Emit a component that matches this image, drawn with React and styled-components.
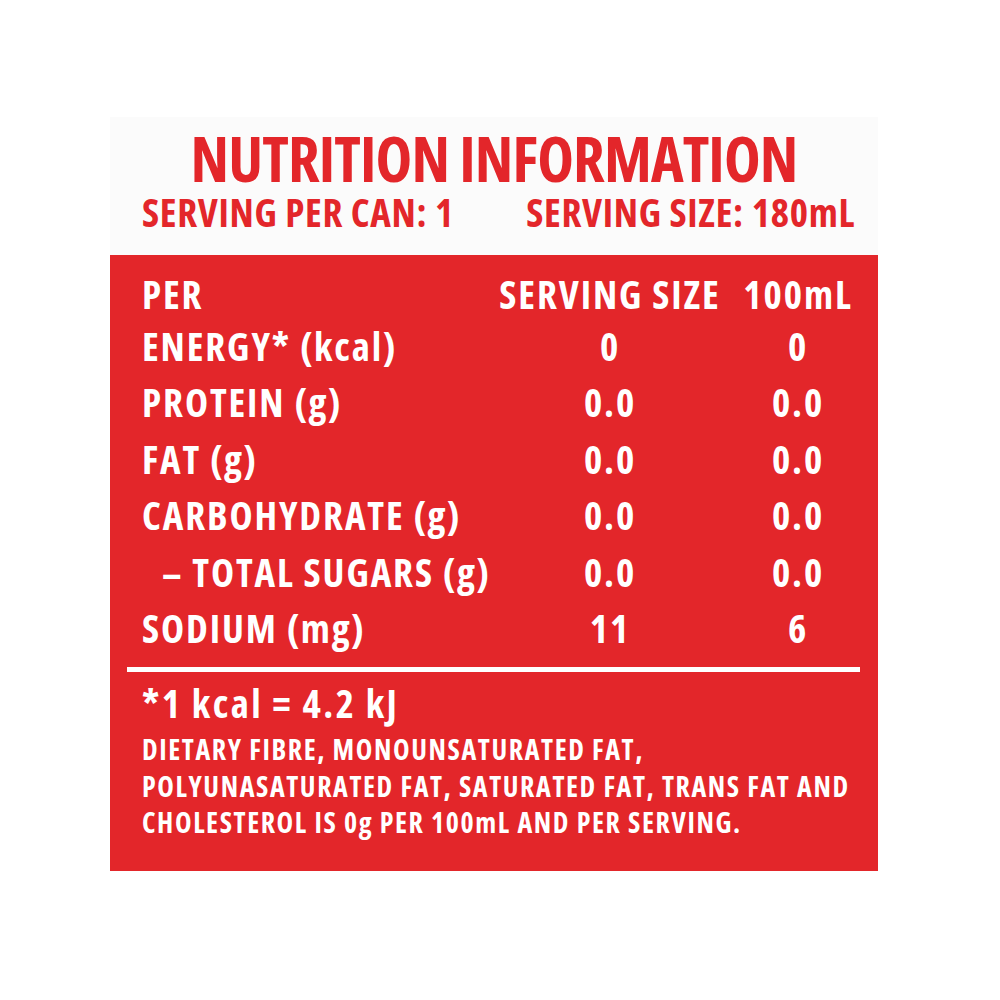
import React from "react";
import styled, { createGlobalStyle } from "styled-components";

const RED = "#e3262a";

const GlobalStyle = createGlobalStyle`
  html, body {
    margin: 0;
    padding: 0;
    background: #ffffff;
  }
  body {
    font-family: "Open Sans", "Roboto", sans-serif;
    font-stretch: 75%;
    font-weight: 700;
  }
`;

const Page = styled.div`
  width: 1000px;
  height: 1000px;
  padding: 117px 0 0 110px;
  box-sizing: border-box;
`;

const Label = styled.div`
  width: 768px;
`;

const Header = styled.div`
  background: #fbfbfb;
  height: 138px;
  box-sizing: border-box;
  padding-top: 9px;
  color: ${RED};
`;

const Title = styled.h1`
  margin: 0;
  font-size: 62px;
  line-height: 64px;
  font-weight: 700;
  text-align: center;
  letter-spacing: -0.9px;
  white-space: nowrap;
`;

const ServingRow = styled.div`
  display: flex;
  justify-content: space-between;
  padding: 0 23px 0 32px;
  font-size: 39px;
  line-height: 44px;
  letter-spacing: 0.7px;
  white-space: nowrap;
`;

const Body = styled.div`
  background: ${RED};
  color: #ffffff;
  height: 616px;
  box-sizing: border-box;
  padding-top: 15px;
`;

const Table = styled.div`
  display: grid;
  grid-template-columns: minmax(0, 1fr) 218px 120px;
  column-gap: 19px;
  padding: 0 20px 0 32px;
  font-size: 39px;
  letter-spacing: 1.9px;
`;

const Cell = styled.div`
  line-height: ${(p) => (p.$head ? "47.5px" : "56.6px")};
  white-space: nowrap;
  justify-self: ${(p) => (p.$num ? "center" : "start")};
  padding-left: ${(p) => (p.$indent ? "20px" : "0")};
`;

const Divider = styled.div`
  height: 5px;
  background: #ffffff;
  margin: 10px 18px 0 17px;
`;

const Footnote = styled.div`
  padding-left: 32px;
  margin-top: 9px;
  font-size: 39px;
  line-height: 44px;
  letter-spacing: 2.4px;
`;

const Note = styled.p`
  margin: 6px 0 0;
  padding: 0 20px 0 32px;
  font-size: 28px;
  line-height: 36.5px;
  letter-spacing: 1.6px;
  white-space: nowrap;
`;

const rows = [
  { name: "ENERGY* (kcal)", serving: "0", per100: "0" },
  { name: "PROTEIN (g)", serving: "0.0", per100: "0.0" },
  { name: "FAT (g)", serving: "0.0", per100: "0.0" },
  { name: "CARBOHYDRATE (g)", serving: "0.0", per100: "0.0" },
  { name: "– TOTAL SUGARS (g)", serving: "0.0", per100: "0.0", indent: true },
  { name: "SODIUM (mg)", serving: "11", per100: "6" },
];

export default function App() {
  return (
    <Page>
      <GlobalStyle />
      <Label>
        <Header>
          <Title>NUTRITION INFORMATION</Title>
          <ServingRow>
            <span>SERVING PER CAN: 1</span>
            <span>SERVING SIZE: 180mL</span>
          </ServingRow>
        </Header>
        <Body>
          <Table>
            <Cell $head>PER</Cell>
            <Cell $head $num>SERVING SIZE</Cell>
            <Cell $head $num>100mL</Cell>
            {rows.map((r) => (
              <React.Fragment key={r.name}>
                <Cell $indent={r.indent}>{r.name}</Cell>
                <Cell $num>{r.serving}</Cell>
                <Cell $num>{r.per100}</Cell>
              </React.Fragment>
            ))}
          </Table>
          <Divider />
          <Footnote>*1 kcal = 4.2 kJ</Footnote>
          <Note>
            DIETARY FIBRE, MONOUNSATURATED FAT,
            <br />
            POLYUNASATURATED FAT, SATURATED FAT, TRANS FAT AND
            <br />
            CHOLESTEROL IS 0g PER 100mL AND PER SERVING.
          </Note>
        </Body>
      </Label>
    </Page>
  );
}
